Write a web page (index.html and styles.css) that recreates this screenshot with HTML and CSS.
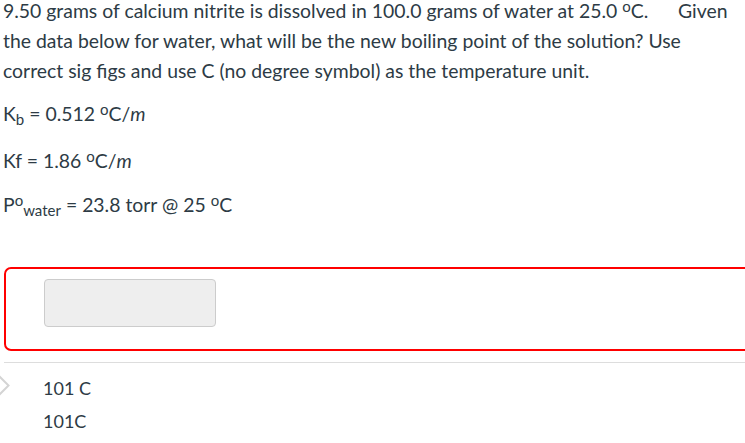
FILE: index.html
```html
<!DOCTYPE html>
<html>
<head>
<meta charset="utf-8">
<link rel="stylesheet" href="styles.css">
</head>
<body>
<div class="question">
  <p class="intro">9.50 grams of calcium nitrite is dissolved in 100.0 grams of water at 25.0 <sup>o</sup>C.&nbsp;&nbsp;&nbsp;&nbsp;&nbsp; Given the data below for water, what will be the new boiling point of the solution? Use correct sig figs and use C (no degree symbol) as the temperature unit.</p>
  <p class="const kb">K<sub>b</sub> = 0.512 <sup>o</sup>C/<i>m</i></p>
  <p class="const kf">Kf = 1.86 <sup>o</sup>C/<i>m</i></p>
  <p class="const pw">P<sup>o</sup><sub>water</sub> = 23.8 torr @ 25 <sup>o</sup>C</p>
</div>
<div class="answer-box">
  <div class="input"></div>
</div>
<div class="divider"></div>
<div class="answers">
  <span class="arrow"></span>
  <div class="ans">101 C</div>
  <div class="ans">101C</div>
</div>
</body>
</html>
```

FILE: styles.css
```css
html, body {
  margin: 0;
  padding: 0;
  background: #fff;
  overflow: hidden;
}
body {
  font-family: Lato, "Open Sans", sans-serif;
  color: #2d3b45;
  font-size: 19.4px;
}
.question {
  width: 740px;
  padding: 0 0 0 3px;
}
p {
  margin: 0;
  line-height: 30px;
}
.intro {
  margin-top: -4px;
}
.kb {
  margin-top: 13px;
}
.kf {
  margin-top: 17px;
}
.pw {
  margin-top: 14px;
}
sup {
  font-size: 15px;
  vertical-align: 6px;
  line-height: 0;
}
sub {
  font-size: 15px;
  vertical-align: -4px;
  line-height: 0;
}
i {
  font-style: italic;
}
.answer-box {
  margin: 47px 0 0 4px;
  width: 900px;
  height: 80px;
  border: 2px solid #ff0000;
  border-radius: 7px;
  display: flex;
  align-items: flex-start;
}
.input {
  margin: 10px 0 0 38px;
  width: 170px;
  height: 46px;
  background: #eeeeee;
  border: 1px solid #cccccc;
  border-radius: 4px;
}
.divider {
  margin: 11px 0 0 4px;
  height: 1px;
  background: #dddddd;
}
.answers {
  position: relative;
  padding: 9px 0 0 43px;
}
.ans {
  font-size: 18px;
  line-height: 33px;
}
.arrow {
  position: absolute;
  left: -13px;
  top: 13px;
  width: 15px;
  height: 15px;
  border: 2px solid #d4d4d4;
  background: #fff;
  transform: rotate(45deg);
}
```
